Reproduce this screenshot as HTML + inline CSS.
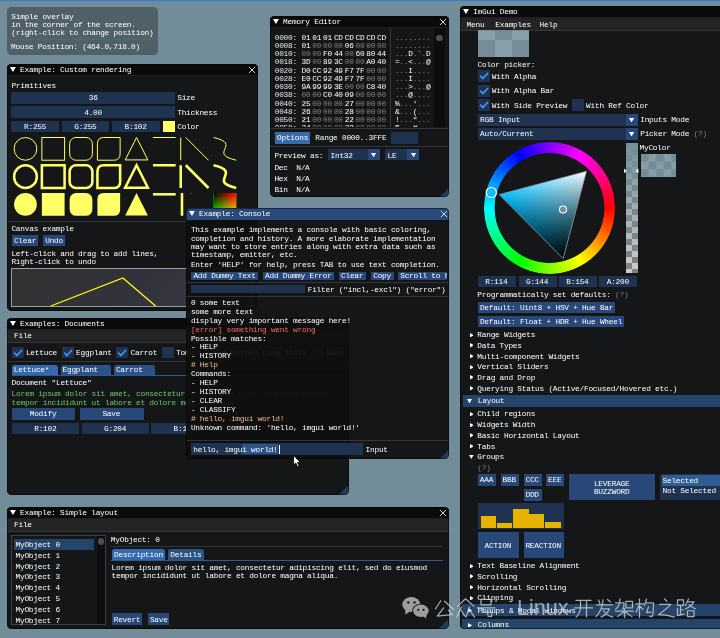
<!DOCTYPE html><html><head><meta charset="utf-8"><style>
html,body{margin:0;padding:0}
body{width:720px;height:638px;overflow:hidden;background:#738c99;position:relative;font-family:"Liberation Mono",monospace}
.r{position:absolute}
.w{position:absolute;overflow:hidden;will-change:transform}
.in{position:absolute;width:0;height:0}
.bd{position:absolute;left:0;top:0;right:0;bottom:0;box-shadow:inset 0 0 0 1px rgba(0,0,0,.5);pointer-events:none}
.t{position:absolute;white-space:pre;color:#fff;font-size:7.8px;letter-spacing:-0.235px;line-height:8.25px}
</style></head><body>
<div class="r" style="left:0px;top:0px;width:720px;height:1.2px;background:#2f7fd3;"></div>
<div class="w" style="left:7px;top:7px;width:150.5px;height:47.5px;background:rgba(15,15,15,.35);border-radius:4.4px">
<div class="in" style="left:-7px;top:-7px">
<div class="t" style="left:11.3px;top:12.8px">Simple overlay
in the corner of the screen.
(right-click to change position)</div>
<div class="r" style="left:7px;top:39.3px;width:150.5px;height:1px;background:rgba(110,110,128,.36);"></div>
<div class="t" style="left:11.1px;top:42.7px">Mouse Position: (464.0,718.0)</div>
</div>
</div>
<div class="w" style="left:6.9px;top:63.7px;width:251px;height:246.9px;background:rgba(15,15,15,.94);border-radius:4.5px">
<div class="in" style="left:-6.9px;top:-63.7px">
<div class="r" style="left:6.9px;top:63.7px;width:251px;height:12px;background:#0a0a0a;"></div>
<div class="r" style="left:6.9px;top:74.6px;width:251px;height:1.2px;background:rgba(110,110,128,.2);"></div>
<svg class="r" style="left:10.3px;top:67px" width="5.9" height="5"><polygon points="0,0 5.9,0 2.95,5" fill="#fff"/></svg>
<div class="t" style="left:20px;top:65.9px">Example: Custom rendering</div>
<svg class="r" style="left:252.3px;top:69.6px;overflow:visible" width="1" height="1"><path d="M-3.1 -3.1L3.1 3.1M3.1 -3.1L-3.1 3.1" stroke="#e0e0e0" stroke-width="0.95"/></svg>
<div class="t" style="left:11.3px;top:81.4px">Primitives</div>
<div class="r" style="left:11.1px;top:91.4px;width:163.7px;height:11.8px;background:#1f3350;"></div>
<div class="t" style="left:88.6px;top:93.7px">36</div>
<div class="r" style="left:11.1px;top:105.8px;width:163.7px;height:11.8px;background:#1f3350;"></div>
<div class="t" style="left:84.1px;top:108.2px">4.00</div>
<div class="r" style="left:11.1px;top:120.3px;width:48.1px;height:11.7px;background:#1f3350;"></div>
<div class="t" style="left:23.9px;top:122.6px">R:255</div>
<div class="r" style="left:61.5px;top:120.3px;width:47.8px;height:11.7px;background:#1f3350;"></div>
<div class="t" style="left:74.2px;top:122.6px">G:255</div>
<div class="r" style="left:111.6px;top:120.3px;width:48px;height:11.7px;background:#1f3350;"></div>
<div class="t" style="left:124.4px;top:122.6px">B:102</div>
<div class="r" style="left:163px;top:120.6px;width:11.5px;height:11.2px;background:#ffff66;"></div>
<div class="t" style="left:177.1px;top:93.8px">Size</div>
<div class="t" style="left:177.1px;top:108.4px">Thickness</div>
<div class="t" style="left:177.1px;top:122.9px">Color</div>
<svg class="r" style="left:0;top:0" width="260" height="320"><circle cx="25.46" cy="148.86" r="11.36" fill="none" stroke="#ffff66" stroke-width="1"/><rect x="41.87" y="137.5" width="22.72" height="22.72" fill="none" stroke="#ffff66" stroke-width="1"/><rect x="69.64" y="137.5" width="22.72" height="22.72" rx="6.35" fill="none" stroke="#ffff66" stroke-width="1"/><path d="M97.41 143.85 Q97.41 137.5 103.76 137.5 L120.13 137.5 L120.13 153.87 Q120.13 160.22 113.78 160.22 L97.41 160.22 Z" fill="none" stroke="#ffff66" stroke-width="1"/><polygon points="136.54,137.5 147.9,159.92 125.18,159.92" fill="none" stroke="#ffff66" stroke-width="1"/><line x1="152.95" y1="137.5" x2="175.67" y2="137.5" fill="none" stroke="#ffff66" stroke-width="1"/><line x1="180.72" y1="137.5" x2="180.72" y2="160.22" fill="none" stroke="#ffff66" stroke-width="1"/><line x1="185.77" y1="137.5" x2="208.49" y2="160.22" fill="none" stroke="#ffff66" stroke-width="1"/><path d="M213.54 137.5 C243.08 144.32 206.72 153.4 236.26 160.22" fill="none" stroke="#ffff66" stroke-width="1"/><circle cx="25.46" cy="176.63" r="11.36" fill="none" stroke="#ffff66" stroke-width="2.54"/><rect x="41.87" y="165.27" width="22.72" height="22.72" fill="none" stroke="#ffff66" stroke-width="2.54"/><rect x="69.64" y="165.27" width="22.72" height="22.72" rx="6.35" fill="none" stroke="#ffff66" stroke-width="2.54"/><path d="M97.41 171.62 Q97.41 165.27 103.76 165.27 L120.13 165.27 L120.13 181.64 Q120.13 187.99 113.78 187.99 L97.41 187.99 Z" fill="none" stroke="#ffff66" stroke-width="2.54"/><polygon points="136.54,165.27 147.9,187.69 125.18,187.69" fill="none" stroke="#ffff66" stroke-width="2.54"/><line x1="152.95" y1="165.27" x2="175.67" y2="165.27" fill="none" stroke="#ffff66" stroke-width="2.54"/><line x1="180.72" y1="165.27" x2="180.72" y2="187.99" fill="none" stroke="#ffff66" stroke-width="2.54"/><line x1="185.77" y1="165.27" x2="208.49" y2="187.99" fill="none" stroke="#ffff66" stroke-width="2.54"/><path d="M213.54 165.27 C243.08 172.09 206.72 181.17 236.26 187.99" fill="none" stroke="#ffff66" stroke-width="2.54"/><circle cx="25.46" cy="204.4" r="11.36" fill="#ffff66"/><rect x="41.87" y="193.04" width="22.72" height="22.72" fill="#ffff66"/><rect x="69.64" y="193.04" width="22.72" height="22.72" rx="6.35" fill="#ffff66"/><path d="M97.41 199.39 Q97.41 193.04 103.76 193.04 L120.13 193.04 L120.13 209.41 Q120.13 215.76 113.78 215.76 L97.41 215.76 Z" fill="#ffff66"/><polygon points="136.54,193.04 147.9,215.46 125.18,215.46" fill="#ffff66"/><rect x="152.95" y="193.04" width="22.72" height="2.54" fill="#ffff66"/><rect x="180.72" y="193.04" width="2.54" height="22.72" fill="#ffff66"/><rect x="190.82" y="193.04" width="0.7" height="0.7" fill="#ffff66"/><defs><linearGradient id="gt" x1="0" x2="1" y1="0" y2="0"><stop offset="0" stop-color="#000"/><stop offset="1" stop-color="#f00"/></linearGradient><linearGradient id="gb" x1="0" x2="1" y1="0" y2="0"><stop offset="0" stop-color="#0f0"/><stop offset="1" stop-color="#ff0"/></linearGradient><linearGradient id="gm" x1="0" x2="0" y1="0" y2="1"><stop offset="0" stop-color="#fff"/><stop offset="1" stop-color="#000"/></linearGradient><mask id="mk"><rect x="213.54" y="193.04" width="22.72" height="22.72" fill="url(#gm)"/></mask></defs><rect x="213.54" y="193.04" width="22.72" height="22.72" fill="url(#gb)"/><rect x="213.54" y="193.04" width="22.72" height="22.72" fill="url(#gt)" mask="url(#mk)"/></svg>
<div class="r" style="left:6.9px;top:220.7px;width:251px;height:1px;background:rgba(110,110,128,.36);"></div>
<div class="t" style="left:11.3px;top:224.4px">Canvas example</div>
<div class="r" style="left:11.7px;top:234.2px;width:26.1px;height:11.6px;background:#28487a;"></div>
<div class="t" style="left:13.8px;top:236.4px">Clear</div>
<div class="r" style="left:43px;top:234.2px;width:22px;height:11.6px;background:#28487a;"></div>
<div class="t" style="left:45.1px;top:236.4px">Undo</div>
<div class="t" style="left:11.3px;top:249.7px">Left-click and drag to add lines,
Right-click to undo</div>
<div class="r" style="left:11.2px;top:267.8px;width:241.6px;height:38.4px;background:linear-gradient(135deg,#323232,#32323c 50%,#3c3c46);border:1.2px solid #9e9e9e;box-sizing:border-box"></div>
<svg class="r" style="left:0;top:0" width="260" height="320"><polyline points="50.8,306 122.9,278 155.6,306" fill="none" stroke="#ffff00" stroke-width="1.3"/></svg>
<svg class="r" style="left:247.4px;top:300.1px" width="10.5" height="10.5"><polygon points="10.5,0 10.5,10.5 0,10.5" fill="rgba(66,150,250,.3)"/></svg>
</div>
<div class="bd" style="border-radius:inherit"></div>
</div>
<div class="w" style="left:7.2px;top:318.3px;width:341.6px;height:177.3px;background:rgba(15,15,15,.94);border-radius:4.5px">
<div class="in" style="left:-7.2px;top:-318.3px">
<div class="r" style="left:7.2px;top:318.3px;width:341.6px;height:12px;background:#0a0a0a;"></div>
<div class="r" style="left:7.2px;top:329.2px;width:341.6px;height:1.2px;background:rgba(110,110,128,.2);"></div>
<svg class="r" style="left:10.6px;top:321.6px" width="5.9" height="5"><polygon points="0,0 5.9,0 2.95,5" fill="#fff"/></svg>
<div class="t" style="left:20.3px;top:320.5px">Examples: Documents</div>
<div class="r" style="left:7.2px;top:330.3px;width:341.6px;height:12px;background:#242424;"></div>
<div class="r" style="left:7.2px;top:342.1px;width:341.6px;height:1px;background:rgba(110,110,128,.36);"></div>
<div class="t" style="left:14.2px;top:332.5px">File</div>
<div class="r" style="left:12px;top:346.9px;width:11.9px;height:11.9px;background:#1f3350;"></div>
<svg class="r" style="left:12px;top:346.9px" width="12" height="12"><polyline points="2.3,5.7 4.9,8.5 10,3" fill="none" stroke="#4296fa" stroke-width="1.75"/></svg>
<div class="t" style="left:26.1px;top:349.4px">Lettuce</div>
<div class="r" style="left:62.2px;top:346.9px;width:11.9px;height:11.9px;background:#1f3350;"></div>
<svg class="r" style="left:62.2px;top:346.9px" width="12" height="12"><polyline points="2.3,5.7 4.9,8.5 10,3" fill="none" stroke="#4296fa" stroke-width="1.75"/></svg>
<div class="t" style="left:76.3px;top:349.4px">Eggplant</div>
<div class="r" style="left:116.6px;top:346.9px;width:11.9px;height:11.9px;background:#1f3350;"></div>
<svg class="r" style="left:116.6px;top:346.9px" width="12" height="12"><polyline points="2.3,5.7 4.9,8.5 10,3" fill="none" stroke="#4296fa" stroke-width="1.75"/></svg>
<div class="t" style="left:130.7px;top:349.4px">Carrot</div>
<div class="r" style="left:162.2px;top:346.9px;width:11.9px;height:11.9px;background:#1f3350;"></div>
<div class="t" style="left:176.3px;top:349.4px">Tomato</div>
<div class="r" style="left:208.3px;top:346.9px;width:11.9px;height:11.9px;background:#1f3350;"></div>
<div class="t" style="left:222.4px;top:349.4px">A Rather Long Title</div>
<div class="r" style="left:312.4px;top:346.9px;width:11.9px;height:11.9px;background:#1f3350;"></div>
<div class="t" style="left:326.5px;top:349.4px">Some Document</div>
<div class="r" style="left:7.2px;top:360.8px;width:341.6px;height:1px;background:rgba(110,110,128,.36);"></div>
<div class="r" style="left:12px;top:375px;width:332px;height:1px;background:#2d5894;"></div>
<div class="r" style="left:12px;top:365px;width:46.3px;height:10.5px;background:#3369ad;border-radius:2.5px 2.5px 0 0"></div>
<div class="t" style="left:13.9px;top:366.7px">Lettuce*</div>
<div class="r" style="left:60.8px;top:365px;width:50.2px;height:10.5px;background:#2b5284;border-radius:2.5px 2.5px 0 0"></div>
<div class="t" style="left:62.7px;top:366.7px">Eggplant</div>
<div class="r" style="left:114.2px;top:365px;width:41.3px;height:10.5px;background:#2b5284;border-radius:2.5px 2.5px 0 0"></div>
<div class="t" style="left:116.1px;top:366.7px">Carrot</div>
<div class="t" style="left:11.7px;top:379.4px">Document &quot;Lettuce&quot;</div>
<div class="t" style="left:11.8px;top:390.6px;color:#66cc66">Lorem ipsum dolor sit amet, consectetur adipiscing elit, sed do eiusmod
tempor incididunt ut labore et dolore magna aliqua.</div>
<div class="r" style="left:12px;top:408.3px;width:63.3px;height:11.7px;background:#28487a;"></div>
<div class="t" style="left:29.9px;top:410.6px">Modify</div>
<div class="r" style="left:80.4px;top:408.3px;width:63.4px;height:11.7px;background:#28487a;"></div>
<div class="t" style="left:102.6px;top:410.6px">Save</div>
<div class="r" style="left:12px;top:422.8px;width:67.2px;height:11.9px;background:#1f3350;"></div>
<div class="t" style="left:34.4px;top:425.2px">R:102</div>
<div class="r" style="left:81.8px;top:422.8px;width:67.2px;height:11.9px;background:#1f3350;"></div>
<div class="t" style="left:104.2px;top:425.2px">G:204</div>
<div class="r" style="left:151.4px;top:422.8px;width:67.2px;height:11.9px;background:#1f3350;"></div>
<div class="t" style="left:173.8px;top:425.2px">B:102</div>
<svg class="r" style="left:338.3px;top:485.1px" width="10.5" height="10.5"><polygon points="10.5,0 10.5,10.5 0,10.5" fill="rgba(66,150,250,.3)"/></svg>
</div>
<div class="bd" style="border-radius:inherit"></div>
</div>
<div class="w" style="left:270px;top:16px;width:179px;height:181px;background:rgba(15,15,15,.94);border-radius:4.5px">
<div class="in" style="left:-270px;top:-16px">
<div class="r" style="left:270px;top:16px;width:179px;height:12px;background:#0a0a0a;"></div>
<div class="r" style="left:270px;top:26.9px;width:179px;height:1.2px;background:rgba(110,110,128,.2);"></div>
<svg class="r" style="left:273.4px;top:19.3px" width="5.9" height="5"><polygon points="0,0 5.9,0 2.95,5" fill="#fff"/></svg>
<div class="t" style="left:283.1px;top:18.2px">Memory Editor</div>
<svg class="r" style="left:443.4px;top:21.9px;overflow:visible" width="1" height="1"><path d="M-3.1 -3.1L3.1 3.1M3.1 -3.1L-3.1 3.1" stroke="#e0e0e0" stroke-width="0.95"/></svg>
<div class="w" style="left:270px;top:28px;width:179px;height:98.6px"><div class="in" style="left:-270px;top:-28px">
<div class="t" style="left:274.7px;top:33.8px;color:#e6e6e6">0000:</div>
<div class="t" style="left:301.5px;top:33.8px;color:#fff">01</div>
<div class="t" style="left:394.9px;top:33.8px;color:#808080">.</div>
<div class="t" style="left:312.3px;top:33.8px;color:#fff">01</div>
<div class="t" style="left:399.34px;top:33.8px;color:#808080">.</div>
<div class="t" style="left:323.1px;top:33.8px;color:#fff">01</div>
<div class="t" style="left:403.79px;top:33.8px;color:#808080">.</div>
<div class="t" style="left:333.9px;top:33.8px;color:#fff">CD</div>
<div class="t" style="left:408.23px;top:33.8px;color:#808080">.</div>
<div class="t" style="left:344.7px;top:33.8px;color:#fff">CD</div>
<div class="t" style="left:412.68px;top:33.8px;color:#808080">.</div>
<div class="t" style="left:355.5px;top:33.8px;color:#fff">CD</div>
<div class="t" style="left:417.12px;top:33.8px;color:#808080">.</div>
<div class="t" style="left:366.3px;top:33.8px;color:#fff">CD</div>
<div class="t" style="left:421.57px;top:33.8px;color:#808080">.</div>
<div class="t" style="left:377.1px;top:33.8px;color:#fff">CD</div>
<div class="t" style="left:426.01px;top:33.8px;color:#808080">.</div>
<div class="t" style="left:274.7px;top:42.02px;color:#e6e6e6">0008:</div>
<div class="t" style="left:301.5px;top:42.02px;color:#fff">01</div>
<div class="t" style="left:394.9px;top:42.02px;color:#808080">.</div>
<div class="t" style="left:312.3px;top:42.02px;color:#808080">00</div>
<div class="t" style="left:399.34px;top:42.02px;color:#808080">.</div>
<div class="t" style="left:323.1px;top:42.02px;color:#808080">00</div>
<div class="t" style="left:403.79px;top:42.02px;color:#808080">.</div>
<div class="t" style="left:333.9px;top:42.02px;color:#808080">00</div>
<div class="t" style="left:408.23px;top:42.02px;color:#808080">.</div>
<div class="t" style="left:344.7px;top:42.02px;color:#fff">06</div>
<div class="t" style="left:412.68px;top:42.02px;color:#808080">.</div>
<div class="t" style="left:355.5px;top:42.02px;color:#808080">00</div>
<div class="t" style="left:417.12px;top:42.02px;color:#808080">.</div>
<div class="t" style="left:366.3px;top:42.02px;color:#808080">00</div>
<div class="t" style="left:421.57px;top:42.02px;color:#808080">.</div>
<div class="t" style="left:377.1px;top:42.02px;color:#808080">00</div>
<div class="t" style="left:426.01px;top:42.02px;color:#808080">.</div>
<div class="t" style="left:274.7px;top:50.24px;color:#e6e6e6">0010:</div>
<div class="t" style="left:301.5px;top:50.24px;color:#808080">00</div>
<div class="t" style="left:394.9px;top:50.24px;color:#808080">.</div>
<div class="t" style="left:312.3px;top:50.24px;color:#808080">00</div>
<div class="t" style="left:399.34px;top:50.24px;color:#808080">.</div>
<div class="t" style="left:323.1px;top:50.24px;color:#fff">F0</div>
<div class="t" style="left:403.79px;top:50.24px;color:#808080">.</div>
<div class="t" style="left:333.9px;top:50.24px;color:#fff">44</div>
<div class="t" style="left:408.23px;top:50.24px;color:#fff">D</div>
<div class="t" style="left:344.7px;top:50.24px;color:#808080">00</div>
<div class="t" style="left:412.68px;top:50.24px;color:#808080">.</div>
<div class="t" style="left:355.5px;top:50.24px;color:#fff">60</div>
<div class="t" style="left:417.12px;top:50.24px;color:#fff">`</div>
<div class="t" style="left:366.3px;top:50.24px;color:#fff">80</div>
<div class="t" style="left:421.57px;top:50.24px;color:#808080">.</div>
<div class="t" style="left:377.1px;top:50.24px;color:#fff">44</div>
<div class="t" style="left:426.01px;top:50.24px;color:#fff">D</div>
<div class="t" style="left:274.7px;top:58.46px;color:#e6e6e6">0018:</div>
<div class="t" style="left:301.5px;top:58.46px;color:#fff">3D</div>
<div class="t" style="left:394.9px;top:58.46px;color:#fff">=</div>
<div class="t" style="left:312.3px;top:58.46px;color:#808080">00</div>
<div class="t" style="left:399.34px;top:58.46px;color:#808080">.</div>
<div class="t" style="left:323.1px;top:58.46px;color:#fff">89</div>
<div class="t" style="left:403.79px;top:58.46px;color:#808080">.</div>
<div class="t" style="left:333.9px;top:58.46px;color:#fff">3C</div>
<div class="t" style="left:408.23px;top:58.46px;color:#fff">&lt;</div>
<div class="t" style="left:344.7px;top:58.46px;color:#808080">00</div>
<div class="t" style="left:412.68px;top:58.46px;color:#808080">.</div>
<div class="t" style="left:355.5px;top:58.46px;color:#808080">00</div>
<div class="t" style="left:417.12px;top:58.46px;color:#808080">.</div>
<div class="t" style="left:366.3px;top:58.46px;color:#fff">A0</div>
<div class="t" style="left:421.57px;top:58.46px;color:#808080">.</div>
<div class="t" style="left:377.1px;top:58.46px;color:#fff">40</div>
<div class="t" style="left:426.01px;top:58.46px;color:#fff">@</div>
<div class="t" style="left:274.7px;top:66.68px;color:#e6e6e6">0020:</div>
<div class="t" style="left:301.5px;top:66.68px;color:#fff">D0</div>
<div class="t" style="left:394.9px;top:66.68px;color:#808080">.</div>
<div class="t" style="left:312.3px;top:66.68px;color:#fff">CC</div>
<div class="t" style="left:399.34px;top:66.68px;color:#808080">.</div>
<div class="t" style="left:323.1px;top:66.68px;color:#fff">92</div>
<div class="t" style="left:403.79px;top:66.68px;color:#808080">.</div>
<div class="t" style="left:333.9px;top:66.68px;color:#fff">49</div>
<div class="t" style="left:408.23px;top:66.68px;color:#fff">I</div>
<div class="t" style="left:344.7px;top:66.68px;color:#fff">F7</div>
<div class="t" style="left:412.68px;top:66.68px;color:#808080">.</div>
<div class="t" style="left:355.5px;top:66.68px;color:#fff">7F</div>
<div class="t" style="left:417.12px;top:66.68px;color:#808080">.</div>
<div class="t" style="left:366.3px;top:66.68px;color:#808080">00</div>
<div class="t" style="left:421.57px;top:66.68px;color:#808080">.</div>
<div class="t" style="left:377.1px;top:66.68px;color:#808080">00</div>
<div class="t" style="left:426.01px;top:66.68px;color:#808080">.</div>
<div class="t" style="left:274.7px;top:74.9px;color:#e6e6e6">0028:</div>
<div class="t" style="left:301.5px;top:74.9px;color:#fff">E0</div>
<div class="t" style="left:394.9px;top:74.9px;color:#808080">.</div>
<div class="t" style="left:312.3px;top:74.9px;color:#fff">CC</div>
<div class="t" style="left:399.34px;top:74.9px;color:#808080">.</div>
<div class="t" style="left:323.1px;top:74.9px;color:#fff">92</div>
<div class="t" style="left:403.79px;top:74.9px;color:#808080">.</div>
<div class="t" style="left:333.9px;top:74.9px;color:#fff">49</div>
<div class="t" style="left:408.23px;top:74.9px;color:#fff">I</div>
<div class="t" style="left:344.7px;top:74.9px;color:#fff">F7</div>
<div class="t" style="left:412.68px;top:74.9px;color:#808080">.</div>
<div class="t" style="left:355.5px;top:74.9px;color:#fff">7F</div>
<div class="t" style="left:417.12px;top:74.9px;color:#808080">.</div>
<div class="t" style="left:366.3px;top:74.9px;color:#808080">00</div>
<div class="t" style="left:421.57px;top:74.9px;color:#808080">.</div>
<div class="t" style="left:377.1px;top:74.9px;color:#808080">00</div>
<div class="t" style="left:426.01px;top:74.9px;color:#808080">.</div>
<div class="t" style="left:274.7px;top:83.12px;color:#e6e6e6">0030:</div>
<div class="t" style="left:301.5px;top:83.12px;color:#fff">9A</div>
<div class="t" style="left:394.9px;top:83.12px;color:#808080">.</div>
<div class="t" style="left:312.3px;top:83.12px;color:#fff">99</div>
<div class="t" style="left:399.34px;top:83.12px;color:#808080">.</div>
<div class="t" style="left:323.1px;top:83.12px;color:#fff">99</div>
<div class="t" style="left:403.79px;top:83.12px;color:#808080">.</div>
<div class="t" style="left:333.9px;top:83.12px;color:#fff">3E</div>
<div class="t" style="left:408.23px;top:83.12px;color:#fff">&gt;</div>
<div class="t" style="left:344.7px;top:83.12px;color:#808080">00</div>
<div class="t" style="left:412.68px;top:83.12px;color:#808080">.</div>
<div class="t" style="left:355.5px;top:83.12px;color:#808080">00</div>
<div class="t" style="left:417.12px;top:83.12px;color:#808080">.</div>
<div class="t" style="left:366.3px;top:83.12px;color:#fff">C8</div>
<div class="t" style="left:421.57px;top:83.12px;color:#808080">.</div>
<div class="t" style="left:377.1px;top:83.12px;color:#fff">40</div>
<div class="t" style="left:426.01px;top:83.12px;color:#fff">@</div>
<div class="t" style="left:274.7px;top:91.34px;color:#e6e6e6">0038:</div>
<div class="t" style="left:301.5px;top:91.34px;color:#808080">00</div>
<div class="t" style="left:394.9px;top:91.34px;color:#808080">.</div>
<div class="t" style="left:312.3px;top:91.34px;color:#808080">00</div>
<div class="t" style="left:399.34px;top:91.34px;color:#808080">.</div>
<div class="t" style="left:323.1px;top:91.34px;color:#fff">C0</div>
<div class="t" style="left:403.79px;top:91.34px;color:#808080">.</div>
<div class="t" style="left:333.9px;top:91.34px;color:#fff">40</div>
<div class="t" style="left:408.23px;top:91.34px;color:#fff">@</div>
<div class="t" style="left:344.7px;top:91.34px;color:#fff">09</div>
<div class="t" style="left:412.68px;top:91.34px;color:#808080">.</div>
<div class="t" style="left:355.5px;top:91.34px;color:#808080">00</div>
<div class="t" style="left:417.12px;top:91.34px;color:#808080">.</div>
<div class="t" style="left:366.3px;top:91.34px;color:#808080">00</div>
<div class="t" style="left:421.57px;top:91.34px;color:#808080">.</div>
<div class="t" style="left:377.1px;top:91.34px;color:#808080">00</div>
<div class="t" style="left:426.01px;top:91.34px;color:#808080">.</div>
<div class="t" style="left:274.7px;top:99.56px;color:#e6e6e6">0040:</div>
<div class="t" style="left:301.5px;top:99.56px;color:#fff">25</div>
<div class="t" style="left:394.9px;top:99.56px;color:#fff">%</div>
<div class="t" style="left:312.3px;top:99.56px;color:#808080">00</div>
<div class="t" style="left:399.34px;top:99.56px;color:#808080">.</div>
<div class="t" style="left:323.1px;top:99.56px;color:#808080">00</div>
<div class="t" style="left:403.79px;top:99.56px;color:#808080">.</div>
<div class="t" style="left:333.9px;top:99.56px;color:#808080">00</div>
<div class="t" style="left:408.23px;top:99.56px;color:#808080">.</div>
<div class="t" style="left:344.7px;top:99.56px;color:#fff">27</div>
<div class="t" style="left:412.68px;top:99.56px;color:#fff">&#x27;</div>
<div class="t" style="left:355.5px;top:99.56px;color:#808080">00</div>
<div class="t" style="left:417.12px;top:99.56px;color:#808080">.</div>
<div class="t" style="left:366.3px;top:99.56px;color:#808080">00</div>
<div class="t" style="left:421.57px;top:99.56px;color:#808080">.</div>
<div class="t" style="left:377.1px;top:99.56px;color:#808080">00</div>
<div class="t" style="left:426.01px;top:99.56px;color:#808080">.</div>
<div class="t" style="left:274.7px;top:107.78px;color:#e6e6e6">0048:</div>
<div class="t" style="left:301.5px;top:107.78px;color:#fff">26</div>
<div class="t" style="left:394.9px;top:107.78px;color:#fff">&amp;</div>
<div class="t" style="left:312.3px;top:107.78px;color:#808080">00</div>
<div class="t" style="left:399.34px;top:107.78px;color:#808080">.</div>
<div class="t" style="left:323.1px;top:107.78px;color:#808080">00</div>
<div class="t" style="left:403.79px;top:107.78px;color:#808080">.</div>
<div class="t" style="left:333.9px;top:107.78px;color:#808080">00</div>
<div class="t" style="left:408.23px;top:107.78px;color:#808080">.</div>
<div class="t" style="left:344.7px;top:107.78px;color:#fff">28</div>
<div class="t" style="left:412.68px;top:107.78px;color:#fff">(</div>
<div class="t" style="left:355.5px;top:107.78px;color:#808080">00</div>
<div class="t" style="left:417.12px;top:107.78px;color:#808080">.</div>
<div class="t" style="left:366.3px;top:107.78px;color:#808080">00</div>
<div class="t" style="left:421.57px;top:107.78px;color:#808080">.</div>
<div class="t" style="left:377.1px;top:107.78px;color:#808080">00</div>
<div class="t" style="left:426.01px;top:107.78px;color:#808080">.</div>
<div class="t" style="left:274.7px;top:116px;color:#e6e6e6">0050:</div>
<div class="t" style="left:301.5px;top:116px;color:#fff">21</div>
<div class="t" style="left:394.9px;top:116px;color:#fff">!</div>
<div class="t" style="left:312.3px;top:116px;color:#808080">00</div>
<div class="t" style="left:399.34px;top:116px;color:#808080">.</div>
<div class="t" style="left:323.1px;top:116px;color:#808080">00</div>
<div class="t" style="left:403.79px;top:116px;color:#808080">.</div>
<div class="t" style="left:333.9px;top:116px;color:#808080">00</div>
<div class="t" style="left:408.23px;top:116px;color:#808080">.</div>
<div class="t" style="left:344.7px;top:116px;color:#fff">22</div>
<div class="t" style="left:412.68px;top:116px;color:#fff">&quot;</div>
<div class="t" style="left:355.5px;top:116px;color:#808080">00</div>
<div class="t" style="left:417.12px;top:116px;color:#808080">.</div>
<div class="t" style="left:366.3px;top:116px;color:#808080">00</div>
<div class="t" style="left:421.57px;top:116px;color:#808080">.</div>
<div class="t" style="left:377.1px;top:116px;color:#808080">00</div>
<div class="t" style="left:426.01px;top:116px;color:#808080">.</div>
<div class="t" style="left:274.7px;top:124.22px;color:#e6e6e6">0058:</div>
<div class="t" style="left:301.5px;top:124.22px;color:#fff">24</div>
<div class="t" style="left:394.9px;top:124.22px;color:#fff">$</div>
<div class="t" style="left:312.3px;top:124.22px;color:#808080">00</div>
<div class="t" style="left:399.34px;top:124.22px;color:#808080">.</div>
<div class="t" style="left:323.1px;top:124.22px;color:#808080">00</div>
<div class="t" style="left:403.79px;top:124.22px;color:#808080">.</div>
<div class="t" style="left:333.9px;top:124.22px;color:#808080">00</div>
<div class="t" style="left:408.23px;top:124.22px;color:#808080">.</div>
<div class="t" style="left:344.7px;top:124.22px;color:#fff">23</div>
<div class="t" style="left:412.68px;top:124.22px;color:#fff">#</div>
<div class="t" style="left:355.5px;top:124.22px;color:#808080">00</div>
<div class="t" style="left:417.12px;top:124.22px;color:#808080">.</div>
<div class="t" style="left:366.3px;top:124.22px;color:#808080">00</div>
<div class="t" style="left:421.57px;top:124.22px;color:#808080">.</div>
<div class="t" style="left:377.1px;top:124.22px;color:#808080">00</div>
<div class="t" style="left:426.01px;top:124.22px;color:#808080">.</div>
<div class="r" style="left:389.8px;top:28px;width:1px;height:100.5px;background:rgba(110,110,128,.36);"></div>
<div class="r" style="left:434px;top:28px;width:11px;height:100.5px;background:rgba(5,5,5,.53);"></div>
<div class="r" style="left:436.4px;top:34.6px;width:6.4px;height:6.4px;border-radius:50%;background:#4f4f4f"></div>
</div></div>
<div class="r" style="left:270px;top:128.1px;width:179px;height:1px;background:rgba(110,110,128,.36);"></div>
<div class="r" style="left:274.7px;top:131.7px;width:35.5px;height:11.9px;background:#3a6aa8;"></div>
<div class="t" style="left:277px;top:134.1px">Options</div>
<div class="t" style="left:315.3px;top:134.3px">Range 0000..3FFE</div>
<div class="r" style="left:390.7px;top:131.7px;width:27px;height:11.9px;background:#1f3350;"></div>
<div class="r" style="left:270px;top:146.2px;width:179px;height:1px;background:rgba(110,110,128,.36);"></div>
<div class="t" style="left:274.4px;top:151.6px">Preview as:</div>
<div class="r" style="left:328.3px;top:149.2px;width:39.7px;height:11.3px;background:#1f3350;"></div>
<div class="r" style="left:368px;top:149.2px;width:11.7px;height:11.3px;background:#28487a;"></div>
<div class="t" style="left:330.5px;top:151.5px">Int32</div>
<svg class="r" style="left:371.4px;top:152.8px" width="5" height="4.3"><polygon points="0,0 5,0 2.5,4.3" fill="#fff"/></svg>
<div class="r" style="left:385.4px;top:149.2px;width:21.9px;height:11.3px;background:#1f3350;"></div>
<div class="r" style="left:407.3px;top:149.2px;width:11.7px;height:11.3px;background:#28487a;"></div>
<div class="t" style="left:387.5px;top:151.5px">LE</div>
<svg class="r" style="left:410.7px;top:152.8px" width="5" height="4.3"><polygon points="0,0 5,0 2.5,4.3" fill="#fff"/></svg>
<div class="t" style="left:274.4px;top:164.1px">Dec</div>
<div class="t" style="left:296.2px;top:164.1px">N/A</div>
<div class="t" style="left:274.4px;top:174.9px">Hex</div>
<div class="t" style="left:296.2px;top:174.9px">N/A</div>
<div class="t" style="left:274.4px;top:185.7px">Bin</div>
<div class="t" style="left:296.2px;top:185.7px">N/A</div>
<svg class="r" style="left:438.5px;top:186.5px" width="10.5" height="10.5"><polygon points="10.5,0 10.5,10.5 0,10.5" fill="rgba(66,150,250,.3)"/></svg>
</div>
<div class="bd" style="border-radius:inherit"></div>
</div>
<div class="w" style="left:7px;top:506.7px;width:441.5px;height:122.3px;background:rgba(15,15,15,.94);border-radius:4.5px">
<div class="in" style="left:-7px;top:-506.7px">
<div class="r" style="left:7px;top:506.7px;width:441.5px;height:12px;background:#0a0a0a;"></div>
<div class="r" style="left:7px;top:517.6px;width:441.5px;height:1.2px;background:rgba(110,110,128,.2);"></div>
<svg class="r" style="left:10.4px;top:510px" width="5.9" height="5"><polygon points="0,0 5.9,0 2.95,5" fill="#fff"/></svg>
<div class="t" style="left:20.1px;top:508.9px">Example: Simple layout</div>
<svg class="r" style="left:442.9px;top:512.6px;overflow:visible" width="1" height="1"><path d="M-3.1 -3.1L3.1 3.1M3.1 -3.1L-3.1 3.1" stroke="#e0e0e0" stroke-width="0.95"/></svg>
<div class="r" style="left:7px;top:518.7px;width:441.5px;height:12px;background:#242424;"></div>
<div class="r" style="left:7px;top:530.5px;width:441.5px;height:1px;background:rgba(110,110,128,.36);"></div>
<div class="t" style="left:14px;top:520.8px">File</div>
<div class="r" style="left:11.3px;top:535px;width:95px;height:89.2px;box-shadow:inset 0 0 0 1px rgba(110,110,128,.45)"></div>
<div class="r" style="left:96.8px;top:536px;width:8.5px;height:87.2px;background:rgba(5,5,5,.53);"></div>
<div class="r" style="left:97.6px;top:537.4px;width:6.8px;height:7px;background:#4f4f4f;border-radius:3px"></div>
<div class="r" style="left:14.2px;top:538.8px;width:79.5px;height:10.7px;background:#25446a;"></div>
<div class="t" style="left:15.5px;top:540.6px">MyObject 0</div>
<div class="t" style="left:15.5px;top:551.4px">MyObject 1</div>
<div class="t" style="left:15.5px;top:562.2px">MyObject 2</div>
<div class="t" style="left:15.5px;top:573px">MyObject 3</div>
<div class="t" style="left:15.5px;top:583.8px">MyObject 4</div>
<div class="t" style="left:15.5px;top:594.6px">MyObject 5</div>
<div class="t" style="left:15.5px;top:605.4px">MyObject 6</div>
<div class="t" style="left:15.5px;top:616.2px">MyObject 7</div>
<div class="t" style="left:110.8px;top:535.7px">MyObject: 0</div>
<div class="r" style="left:111.3px;top:545.3px;width:332.1px;height:1px;background:rgba(110,110,128,.36);"></div>
<div class="r" style="left:111.3px;top:559.2px;width:332.1px;height:1px;background:#2d5894;"></div>
<div class="r" style="left:111.5px;top:549px;width:53.4px;height:10.6px;background:#3369ad;border-radius:2.5px 2.5px 0 0"></div>
<div class="t" style="left:114px;top:550.6px">Description</div>
<div class="r" style="left:167.8px;top:549px;width:35.9px;height:10.6px;background:#2b5284;border-radius:2.5px 2.5px 0 0"></div>
<div class="t" style="left:170.3px;top:550.6px">Details</div>
<div class="t" style="left:111.5px;top:563.7px">Lorem ipsum dolor sit amet, consectetur adipiscing elit, sed do eiusmod
tempor incididunt ut labore et dolore magna aliqua.</div>
<div class="r" style="left:111.5px;top:613px;width:30.9px;height:11.6px;background:#28487a;"></div>
<div class="t" style="left:113.7px;top:615.2px">Revert</div>
<div class="r" style="left:147.8px;top:613px;width:21.7px;height:11.6px;background:#28487a;"></div>
<div class="t" style="left:149.9px;top:615.2px">Save</div>
<svg class="r" style="left:438px;top:618.5px" width="10.5" height="10.5"><polygon points="10.5,0 10.5,10.5 0,10.5" fill="rgba(66,150,250,.3)"/></svg>
</div>
<div class="bd" style="border-radius:inherit"></div>
</div>
<div class="w" style="left:460.2px;top:5.8px;width:269.8px;height:623px;background:rgba(15,15,15,.94);border-radius:4.5px">
<div class="in" style="left:-460.2px;top:-5.8px">
<div class="r" style="left:460.2px;top:5.8px;width:269.8px;height:12px;background:#0a0a0a;"></div>
<div class="r" style="left:460.2px;top:16.7px;width:269.8px;height:1.2px;background:rgba(110,110,128,.2);"></div>
<svg class="r" style="left:463.6px;top:9.1px" width="5.9" height="5"><polygon points="0,0 5.9,0 2.95,5" fill="#fff"/></svg>
<div class="t" style="left:473.3px;top:8px">ImGui Demo</div>
<div class="w" style="left:460.2px;top:30.2px;width:270px;height:598.6px"><div class="in" style="left:-460.2px;top:-30.2px">
<div class="r" style="left:478.4px;top:5.9px;width:16.95px;height:16.95px;background:#768d95;"></div>
<div class="r" style="left:495.35px;top:5.9px;width:16.95px;height:16.95px;background:#87a0a8;"></div>
<div class="r" style="left:512.3px;top:5.9px;width:16.95px;height:16.95px;background:#768d95;"></div>
<div class="r" style="left:478.4px;top:22.85px;width:16.95px;height:16.95px;background:#87a0a8;"></div>
<div class="r" style="left:495.35px;top:22.85px;width:16.95px;height:16.95px;background:#768d95;"></div>
<div class="r" style="left:512.3px;top:22.85px;width:16.95px;height:16.95px;background:#87a0a8;"></div>
<div class="r" style="left:478.4px;top:39.8px;width:16.95px;height:16.95px;background:#768d95;"></div>
<div class="r" style="left:495.35px;top:39.8px;width:16.95px;height:16.95px;background:#87a0a8;"></div>
<div class="r" style="left:512.3px;top:39.8px;width:16.95px;height:16.95px;background:#768d95;"></div>
<div class="t" style="left:477.7px;top:60.8px">Color picker:</div>
<div class="r" style="left:478.1px;top:70.3px;width:11.9px;height:11.9px;background:#1f3350;"></div>
<svg class="r" style="left:478.1px;top:70.3px" width="12" height="12"><polyline points="2.3,5.7 4.9,8.5 10,3" fill="none" stroke="#4296fa" stroke-width="1.75"/></svg>
<div class="t" style="left:491.9px;top:72.8px">With Alpha</div>
<div class="r" style="left:478.1px;top:84.8px;width:11.9px;height:11.9px;background:#1f3350;"></div>
<svg class="r" style="left:478.1px;top:84.8px" width="12" height="12"><polyline points="2.3,5.7 4.9,8.5 10,3" fill="none" stroke="#4296fa" stroke-width="1.75"/></svg>
<div class="t" style="left:491.9px;top:87.3px">With Alpha Bar</div>
<div class="r" style="left:478.1px;top:99.2px;width:11.9px;height:11.9px;background:#1f3350;"></div>
<svg class="r" style="left:478.1px;top:99.2px" width="12" height="12"><polyline points="2.3,5.7 4.9,8.5 10,3" fill="none" stroke="#4296fa" stroke-width="1.75"/></svg>
<div class="t" style="left:491.9px;top:101.7px">With Side Preview</div>
<div class="r" style="left:572.5px;top:99.2px;width:11.9px;height:11.9px;background:#1f3350;"></div>
<div class="t" style="left:586.3px;top:101.7px">With Ref Color</div>
<div class="r" style="left:478.1px;top:114.2px;width:147.7px;height:11.6px;background:#1f3350;"></div>
<div class="r" style="left:625.8px;top:114.2px;width:12px;height:11.6px;background:#28487a;"></div>
<svg class="r" style="left:629.2px;top:117.8px" width="5.2" height="4.5"><polygon points="0,0 5.2,0 2.6,4.5" fill="#fff"/></svg>
<div class="t" style="left:480.3px;top:116.5px">RGB Input</div>
<div class="t" style="left:640.4px;top:116.5px">Inputs Mode</div>
<div class="r" style="left:478.1px;top:128.3px;width:147.7px;height:11.6px;background:#1f3350;"></div>
<div class="r" style="left:625.8px;top:128.3px;width:12px;height:11.6px;background:#28487a;"></div>
<svg class="r" style="left:629.2px;top:131.9px" width="5.2" height="4.5"><polygon points="0,0 5.2,0 2.6,4.5" fill="#fff"/></svg>
<div class="t" style="left:480.3px;top:130.6px">Auto/Current</div>
<div class="t" style="left:640.4px;top:130.6px">Picker Mode</div>
<div class="t" style="left:693.74px;top:130.6px;color:#808080">(?)</div>
<div class="r" style="left:484px;top:142.5px;width:131.2px;height:131.2px;border-radius:50%;background:conic-gradient(from 90deg,#f00,#ff0,#0f0,#0ff,#00f,#f0f,#f00);-webkit-mask:radial-gradient(circle,transparent 54.5px,#000 55.3px);mask:radial-gradient(circle,transparent 54.5px,#000 55.3px)"></div>
<svg class="r" style="left:0;top:0" width="720" height="300"><defs><linearGradient id="ga" gradientUnits="userSpaceOnUse" x1="531.15" y1="226.56" x2="586.51" y2="171.19"><stop offset="0" stop-color="#00bfff"/><stop offset="1" stop-color="#fff"/></linearGradient><linearGradient id="gk" gradientUnits="userSpaceOnUse" x1="542.85" y1="182.89" x2="563.11" y2="258.52"><stop offset="0" stop-color="#000" stop-opacity="0"/><stop offset="1" stop-color="#000" stop-opacity="1"/></linearGradient></defs><polygon points="499.18,194.59 586.51,171.19 563.11,258.52" fill="url(#ga)"/><polygon points="499.18,194.59 586.51,171.19 563.11,258.52" fill="url(#gk)"/><polygon points="499.18,194.59 586.51,171.19 563.11,258.52" fill="none" stroke="rgba(150,150,150,.85)" stroke-width="0.9" stroke-linejoin="round"/><circle cx="491.35" cy="192.49" r="5.8" fill="none" stroke="rgba(128,128,128,.9)" stroke-width="0.7"/><circle cx="491.35" cy="192.49" r="5" fill="#00bfff" stroke="#fff" stroke-width="1.1"/><circle cx="563" cy="209.5" r="3.5" fill="rgb(114,144,154)" stroke="#fff" stroke-width="1.1"/></svg>
<div class="r" style="left:625.8px;top:143px;width:12px;height:130px;background:linear-gradient(rgba(114,144,154,1),rgba(114,144,154,0)),repeating-conic-gradient(#cccccc 0 25%,#808080 0 50%) 0 0/12px 12px"></div>
<svg class="r" style="left:624.6px;top:167px" width="15" height="8"><polygon points="0,1.6 2.9,3.9 0,6.2" fill="#fff"/><polygon points="14.4,1.6 11.5,3.9 14.4,6.2" fill="#fff"/></svg>
<div class="t" style="left:639.7px;top:143.9px">MyColor</div>
<div class="r" style="left:640.8px;top:154.2px;width:35.4px;height:22.8px;background:linear-gradient(rgba(114,144,154,.784),rgba(114,144,154,.784)),repeating-conic-gradient(#cccccc 0 25%,#808080 0 50%) 0 0/15.2px 15.2px"></div>
<div class="r" style="left:478.25px;top:276.25px;width:37.5px;height:11.35px;background:#1f3350;"></div>
<div class="t" style="left:485.4px;top:278.4px">R:114</div>
<div class="r" style="left:518.75px;top:276.25px;width:38px;height:11.35px;background:#1f3350;"></div>
<div class="t" style="left:526.15px;top:278.4px">G:144</div>
<div class="r" style="left:559.25px;top:276.25px;width:37.75px;height:11.35px;background:#1f3350;"></div>
<div class="t" style="left:566.52px;top:278.4px">B:154</div>
<div class="r" style="left:599.5px;top:276.25px;width:38px;height:11.35px;background:#1f3350;"></div>
<div class="t" style="left:606.9px;top:278.4px">A:200</div>
<div class="t" style="left:477.5px;top:291.6px">Programmatically set defaults:</div>
<div class="t" style="left:615.3px;top:291.6px;color:#808080">(?)</div>
<div class="r" style="left:477.9px;top:301.8px;width:137.1px;height:11.6px;background:#28487a;"></div>
<div class="t" style="left:480.1px;top:304px">Default: Uint8 + HSV + Hue Bar</div>
<div class="r" style="left:477.9px;top:316px;width:146.1px;height:11.6px;background:#28487a;"></div>
<div class="t" style="left:480.1px;top:318.2px">Default: Float + HDR + Hue Wheel</div>
<svg class="r" style="left:469.8px;top:332.8px" width="3.8" height="4.4"><polygon points="0,0 3.8,2.2 0,4.4" fill="#fff"/></svg>
<div class="t" style="left:477.5px;top:331.4px">Range Widgets</div>
<svg class="r" style="left:469.8px;top:343.52px" width="3.8" height="4.4"><polygon points="0,0 3.8,2.2 0,4.4" fill="#fff"/></svg>
<div class="t" style="left:477.5px;top:342.12px">Data Types</div>
<svg class="r" style="left:469.8px;top:354.24px" width="3.8" height="4.4"><polygon points="0,0 3.8,2.2 0,4.4" fill="#fff"/></svg>
<div class="t" style="left:477.5px;top:352.84px">Multi-component Widgets</div>
<svg class="r" style="left:469.8px;top:364.96px" width="3.8" height="4.4"><polygon points="0,0 3.8,2.2 0,4.4" fill="#fff"/></svg>
<div class="t" style="left:477.5px;top:363.56px">Vertical Sliders</div>
<svg class="r" style="left:469.8px;top:375.68px" width="3.8" height="4.4"><polygon points="0,0 3.8,2.2 0,4.4" fill="#fff"/></svg>
<div class="t" style="left:477.5px;top:374.28px">Drag and Drop</div>
<svg class="r" style="left:469.8px;top:386.4px" width="3.8" height="4.4"><polygon points="0,0 3.8,2.2 0,4.4" fill="#fff"/></svg>
<div class="t" style="left:477.5px;top:385px">Querying Status (Active/Focused/Hovered etc.)</div>
<div class="r" style="left:462.9px;top:395.1px;width:267.1px;height:12.1px;background:#25446a;"></div>
<svg class="r" style="left:467.4px;top:399.2px" width="5" height="4.4"><polygon points="0,0 5,0 2.5,4.4" fill="#fff"/></svg>
<div class="t" style="left:478px;top:397.6px">Layout</div>
<svg class="r" style="left:469.8px;top:412px" width="3.8" height="4.4"><polygon points="0,0 3.8,2.2 0,4.4" fill="#fff"/></svg>
<div class="t" style="left:477.5px;top:410.6px">Child regions</div>
<svg class="r" style="left:469.8px;top:422.72px" width="3.8" height="4.4"><polygon points="0,0 3.8,2.2 0,4.4" fill="#fff"/></svg>
<div class="t" style="left:477.5px;top:421.32px">Widgets Width</div>
<svg class="r" style="left:469.8px;top:433.44px" width="3.8" height="4.4"><polygon points="0,0 3.8,2.2 0,4.4" fill="#fff"/></svg>
<div class="t" style="left:477.5px;top:432.04px">Basic Horizontal Layout</div>
<svg class="r" style="left:469.8px;top:444.16px" width="3.8" height="4.4"><polygon points="0,0 3.8,2.2 0,4.4" fill="#fff"/></svg>
<div class="t" style="left:477.5px;top:442.76px">Tabs</div>
<svg class="r" style="left:469.2px;top:454.9px" width="4.6" height="4"><polygon points="0,0 4.6,0 2.3,4" fill="#fff"/></svg>
<div class="t" style="left:477.5px;top:453.5px">Groups</div>
<div class="t" style="left:477.5px;top:464.4px;color:#808080">(?)</div>
<div class="r" style="left:478.1px;top:474.5px;width:17.9px;height:11.3px;background:#28487a;"></div>
<div class="t" style="left:479.95px;top:476.55px">AAA</div>
<div class="r" style="left:500.9px;top:474.5px;width:17.9px;height:11.3px;background:#28487a;"></div>
<div class="t" style="left:502.75px;top:476.55px">BBB</div>
<div class="r" style="left:523.8px;top:474.5px;width:17.9px;height:11.3px;background:#28487a;"></div>
<div class="t" style="left:525.65px;top:476.55px">CCC</div>
<div class="r" style="left:546.6px;top:474.5px;width:17.4px;height:11.3px;background:#28487a;"></div>
<div class="t" style="left:548.2px;top:476.55px">EEE</div>
<div class="r" style="left:523.8px;top:489px;width:17.9px;height:11.8px;background:#28487a;"></div>
<div class="t" style="left:525.65px;top:491.3px">DDD</div>
<div class="r" style="left:569.3px;top:474.3px;width:86.3px;height:26.3px;background:#28487a;"></div>
<div class="t" style="left:594.1px;top:479.9px">LEVERAGE</div>
<div class="t" style="left:594.1px;top:488.2px">BUZZWORD</div>
<div class="r" style="left:660.4px;top:474.3px;width:69.6px;height:26.3px;background:#1f3350;"></div>
<div class="r" style="left:661.8px;top:475px;width:68.2px;height:10.7px;background:#305d93;"></div>
<div class="t" style="left:662.7px;top:476.8px">Selected</div>
<div class="t" style="left:662.7px;top:487.6px">Not Selected</div>
<div class="r" style="left:478.1px;top:503.2px;width:86px;height:26.4px;background:#1f3350;"></div>
<div class="r" style="left:480.8px;top:516.4px;width:15.6px;height:11.3px;background:#e6b300;"></div>
<div class="r" style="left:497.4px;top:523.6px;width:14.7px;height:4.1px;background:#e6b300;"></div>
<div class="r" style="left:513.1px;top:509.2px;width:15.6px;height:18.5px;background:#e6b300;"></div>
<div class="r" style="left:529.6px;top:513.9px;width:15px;height:13.8px;background:#e6b300;"></div>
<div class="r" style="left:545.6px;top:522.2px;width:15.6px;height:5.5px;background:#e6b300;"></div>
<div class="r" style="left:478.1px;top:532.4px;width:40.7px;height:26.2px;background:#28487a;"></div>
<div class="t" style="left:484.7px;top:541.9px">ACTION</div>
<div class="r" style="left:523.8px;top:532.4px;width:40.2px;height:26.2px;background:#28487a;"></div>
<div class="t" style="left:525.6px;top:541.9px">REACTION</div>
<svg class="r" style="left:469.8px;top:563.8px" width="3.8" height="4.4"><polygon points="0,0 3.8,2.2 0,4.4" fill="#fff"/></svg>
<div class="t" style="left:477.5px;top:562.4px">Text Baseline Alignment</div>
<svg class="r" style="left:469.8px;top:574.5px" width="3.8" height="4.4"><polygon points="0,0 3.8,2.2 0,4.4" fill="#fff"/></svg>
<div class="t" style="left:477.5px;top:573.1px">Scrolling</div>
<svg class="r" style="left:469.8px;top:585.2px" width="3.8" height="4.4"><polygon points="0,0 3.8,2.2 0,4.4" fill="#fff"/></svg>
<div class="t" style="left:477.5px;top:583.8px">Horizontal Scrolling</div>
<svg class="r" style="left:469.8px;top:595.9px" width="3.8" height="4.4"><polygon points="0,0 3.8,2.2 0,4.4" fill="#fff"/></svg>
<div class="t" style="left:477.5px;top:594.5px">Clipping</div>
<div class="r" style="left:462.5px;top:604.5px;width:267.5px;height:12.1px;background:#25446a;"></div>
<svg class="r" style="left:467.8px;top:608.4px" width="4.2" height="4.6"><polygon points="0,0 4.2,2.3 0,4.6" fill="#fff"/></svg>
<div class="t" style="left:478px;top:607px">Popups &amp; Modal windows</div>
<div class="r" style="left:462.5px;top:619.2px;width:267.5px;height:11.8px;background:#25446a;"></div>
<svg class="r" style="left:467.8px;top:623px" width="4.2" height="4.6"><polygon points="0,0 4.2,2.3 0,4.6" fill="#fff"/></svg>
<div class="t" style="left:478px;top:621.6px">Columns</div>
</div></div>
<div class="r" style="left:460.2px;top:17.8px;width:269.8px;height:12px;background:#242424;"></div>
<div class="r" style="left:460.2px;top:29.6px;width:269.8px;height:1px;background:rgba(110,110,128,.36);"></div>
<div class="t" style="left:466.8px;top:20.3px">Menu</div>
<div class="t" style="left:495.5px;top:20.3px">Examples</div>
<div class="t" style="left:539.8px;top:20.3px">Help</div>
</div>
<div class="bd" style="border-radius:inherit"></div>
</div>
<div class="w" style="left:186.1px;top:208px;width:263.4px;height:251px;background:rgba(15,15,15,.94);border-radius:4.5px">
<div class="in" style="left:-186.1px;top:-208px">
<div class="r" style="left:186.1px;top:208px;width:263.4px;height:12px;background:#294a7a;"></div>
<svg class="r" style="left:189.5px;top:211.3px" width="5.9" height="5"><polygon points="0,0 5.9,0 2.95,5" fill="#fff"/></svg>
<div class="t" style="left:199.2px;top:210.2px">Example: Console</div>
<svg class="r" style="left:443.9px;top:213.9px;overflow:visible" width="1" height="1"><path d="M-3.1 -3.1L3.1 3.1M3.1 -3.1L-3.1 3.1" stroke="#e0e0e0" stroke-width="0.95"/></svg>
<div class="w" style="left:186.1px;top:220px;width:260.9px;height:239px"><div class="in" style="left:-186.1px;top:-220px">
<div class="t" style="left:191px;top:226.3px">This example implements a console with basic coloring,
completion and history. A more elaborate implementation
may want to store entries along with extra data such as
timestamp, emitter, etc.</div>
<div class="t" style="left:191px;top:261.4px">Enter &#x27;HELP&#x27; for help, press TAB to use text completion.</div>
<div class="r" style="left:191.2px;top:271.7px;width:67.31px;height:8.1px;background:#28487a;"></div>
<div class="t" style="left:193.5px;top:272.2px">Add Dummy Text</div>
<div class="r" style="left:262.8px;top:271.7px;width:71.75px;height:8.1px;background:#28487a;"></div>
<div class="t" style="left:265.1px;top:272.2px">Add Dummy Error</div>
<div class="r" style="left:338.8px;top:271.7px;width:27.31px;height:8.1px;background:#28487a;"></div>
<div class="t" style="left:341.1px;top:272.2px">Clear</div>
<div class="r" style="left:371px;top:271.7px;width:22.86px;height:8.1px;background:#28487a;"></div>
<div class="t" style="left:373.3px;top:272.2px">Copy</div>
<div class="r" style="left:398px;top:271.7px;width:76.2px;height:8.1px;background:#28487a;"></div>
<div class="t" style="left:400.3px;top:272.2px">Scroll to bottom</div>
</div></div>
<div class="r" style="left:186.1px;top:282.1px;width:263.4px;height:1px;background:rgba(110,110,128,.36);"></div>
<div class="r" style="left:191.2px;top:284.7px;width:113.5px;height:8.6px;background:#1f3350;"></div>
<div class="t" style="left:307.8px;top:285.5px">Filter (&quot;incl,-excl&quot;) (&quot;error&quot;)</div>
<div class="r" style="left:186.1px;top:295.5px;width:263.4px;height:1px;background:rgba(110,110,128,.36);"></div>
<div class="t" style="left:191px;top:298.9px">0 some text</div>
<div class="t" style="left:191px;top:307.8px">some more text</div>
<div class="t" style="left:191px;top:316.7px">display very important message here!</div>
<div class="t" style="left:191px;top:325.6px;color:#ff6666">[error] something went wrong</div>
<div class="t" style="left:191px;top:334.5px">Possible matches:</div>
<div class="t" style="left:191px;top:343.4px">- HELP</div>
<div class="t" style="left:191px;top:352.3px">- HISTORY</div>
<div class="t" style="left:191px;top:361.2px;color:#f0b882"># Help</div>
<div class="t" style="left:191px;top:370.1px">Commands:</div>
<div class="t" style="left:191px;top:379px">- HELP</div>
<div class="t" style="left:191px;top:387.9px">- HISTORY</div>
<div class="t" style="left:191px;top:396.8px">- CLEAR</div>
<div class="t" style="left:191px;top:405.7px">- CLASSIFY</div>
<div class="t" style="left:191px;top:414.6px;color:#f0b882"># hello, imgui world!</div>
<div class="t" style="left:191px;top:423.5px">Unknown command: &#x27;hello, imgui world!&#x27;</div>
<div class="r" style="left:186.1px;top:440.4px;width:263.4px;height:1px;background:rgba(110,110,128,.36);"></div>
<div class="r" style="left:191.3px;top:443.3px;width:171.3px;height:11.9px;background:#1f3350;"></div>
<div class="r" style="left:242.5px;top:444.2px;width:35.8px;height:10.1px;background:rgba(66,150,250,.35);"></div>
<div class="t" style="left:193.4px;top:445.7px">hello, imgui world!</div>
<div class="r" style="left:278.9px;top:444.5px;width:0.8px;height:9.5px;background:#fff;"></div>
<div class="t" style="left:365.7px;top:445.7px">Input</div>
<svg class="r" style="left:439px;top:448.5px" width="10.5" height="10.5"><polygon points="10.5,0 10.5,10.5 0,10.5" fill="rgba(66,150,250,.3)"/></svg>
</div>
<div class="bd" style="border-radius:inherit"></div>
</div>
<svg class="r" style="left:293px;top:455px" width="10" height="14"><path d="M0.5 0.5 L0.5 10 L2.8 8 L4.6 12 L6.2 11.3 L4.5 7.5 L7.5 7.5 Z" fill="#fff" stroke="#000" stroke-width="0.8"/></svg>
<svg class="r" style="left:0;top:0" width="720" height="638"><g fill="none" stroke="rgba(210,212,214,.78)" stroke-width="1.25" stroke-linecap="round" stroke-linejoin="round"><path transform="translate(435,598) scale(1,0.98)" d="M5.8 2.8 L0.5 11 M9.6 3.3 L18.3 11.5 M8.6 10 L2.3 18.4 L16.9 16.9 M13.5 12.5 L17.4 16.9"/><path transform="translate(455.5,598) scale(1,0.98)" d="M10 0.8 L2 8.5 M10 0.8 L18.5 8.5 M6 9 L1.5 19.5 M5.5 12.5 L9.5 18.5 M14 9 L10.5 19.5 M14 12 L19 19.5"/><path transform="translate(476,598) scale(1,0.98)" d="M5 1.5 L15 1.5 L15 7 L5 7 Z M1 10 L19 10 M7.5 10 L6 14.5 L16 14.5 L15.5 19 L12 18.5"/><path transform="translate(573.5,598) scale(1,0.98)" d="M2.5 2.5 L17.5 2.5 M1 10 L19 10 M7 2.5 L7 10 Q6.5 16 2.5 19.5 M13 2.5 L13 19.5"/><path transform="translate(594,598) scale(1,0.98)" d="M2.5 7 L18.5 7 M4.5 2 L6 6 M13.5 1.5 L16.5 4 M9 2 Q8.5 12 2 19 M8 11 L15.5 11 Q13 17 7 19.5 M9.5 13 Q13 18 19 19.5"/><path transform="translate(614.5,598) scale(1,0.98)" d="M1 5 L9.5 5 Q9.5 11 8 11.5 M5.5 1 Q5 9 1 11.5 M11.5 3.5 L18 3.5 L18 10 L11.5 10 Z M1 13.5 L19 13.5 M10 10.5 L10 20 M10 13.5 L3 19 M10 13.5 L17.5 19"/><path transform="translate(635,598) scale(1,0.98)" d="M1 6 L8.5 6 M4.5 1 L4.5 20 M4.5 6.5 L1 14.5 M5 8.5 L8 11.5 M11.5 1 L9.5 7.5 M10.5 5 L18.5 5 Q18.5 17 17 19 L14.5 18.5 M13.5 9 L11.5 15 L16 14.5"/><path transform="translate(655.5,598) scale(1,0.98)" d="M9 1 L11.5 3.5 M4 6.5 L15.5 6.5 Q10 12 3 17 Q10 17 19 19.5"/><path transform="translate(676,598) scale(1,0.98)" d="M1.5 2 L7.5 2 L7.5 7.5 L1.5 7.5 Z M4.5 7.5 L4.5 17 M4.5 12 L7.5 12 M1.5 10.5 L1.5 18 L8 16.5 M12.5 1 L9.5 7.5 M11.5 4 L18 4 Q15 9 9.5 11 M13 6.5 Q16 10 19.5 11 M11.5 13 L18 13 L18 19 L11.5 19 Z"/></g>
<g fill="rgba(165,165,165,.95)"><ellipse cx="411.3" cy="604.5" rx="9" ry="7.5"/><polygon points="405,610 405.5,614.5 410,611.5"/></g><g fill="#141414"><circle cx="408.3" cy="602.4" r="1.2"/><circle cx="414.5" cy="602.4" r="1.2"/></g><ellipse cx="420.9" cy="610.8" rx="8.8" ry="7" fill="#141414"/><g fill="rgba(165,165,165,.95)"><ellipse cx="420.9" cy="610.8" rx="7.8" ry="6.2"/><polygon points="423,616 426,618.5 426.5,614.5"/></g><g fill="#141414"><circle cx="418.2" cy="609.8" r="1.1"/><circle cx="423.6" cy="609.8" r="1.1"/></g>
</svg>
<div class="r" style="left:517px;top:596.5px;font-family:'Liberation Sans',sans-serif;font-size:21.5px;line-height:22px;color:rgba(210,212,214,.72);white-space:pre;will-change:transform">Linux</div>
</body></html>
